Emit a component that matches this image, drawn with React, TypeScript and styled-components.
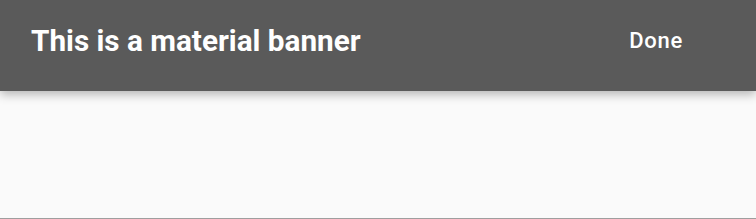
import React from "react";
import styled, { createGlobalStyle } from "styled-components";

const Global = createGlobalStyle`
  html, body { margin: 0; padding: 0; background: #fafafa; }
  #root { height: 219px; }
`;

const Page = styled.div`
  height: 219px;
  box-sizing: border-box;
  background: #fafafa;
  border-bottom: 1px solid #9e9e9e;
  font-family: Roboto, "Liberation Sans", sans-serif;
`;

const Banner = styled.div`
  height: 91px;
  box-sizing: border-box;
  background: #5a5a5a;
  display: flex;
  align-items: center;
  justify-content: space-between;
  padding: 0 73px 0 31px;
  box-shadow: 0 3px 10px rgba(0, 0, 0, 0.3);
`;

const Message = styled.span`
  color: #ffffff;
  font-size: 29.7px;
  line-height: 1;
  font-weight: 700;
  margin-top: -9px;
`;

const Action = styled.button`
  background: transparent;
  border: none;
  padding: 0;
  color: #ffffff;
  font-family: inherit;
  font-size: 22px;
  line-height: 1;
  letter-spacing: 0.7px;
  font-weight: 500;
  margin-top: -10px;
  cursor: pointer;
`;

export default function App() {
  return (
    <>
      <Global />
      <Page>
        <Banner>
          <Message>This is a material banner</Message>
          <Action>Done</Action>
        </Banner>
      </Page>
    </>
  );
}
